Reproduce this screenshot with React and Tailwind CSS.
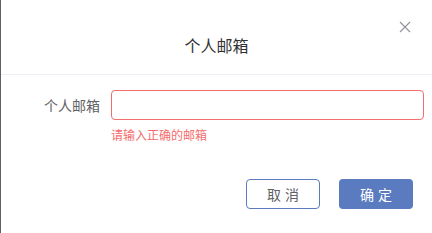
export default function App() {
  return (
    <div
      className="w-[432px] h-[233px] bg-white border-l border-[#5f6066] flex flex-col overflow-hidden"
      style={{ fontFamily: '"Noto Sans CJK SC", "Noto Sans", sans-serif' }}
    >
      {/* header */}
      <div className="relative h-[75px] shrink-0 border-b border-[#ebeef5] flex items-center justify-center pt-[15px]">
        <span className="text-[16px] leading-none text-[#303133]">个人邮箱</span>
        <button className="absolute right-[21px] top-[21px] text-[#909399]">
          <svg width="12" height="12" viewBox="0 0 12 12" fill="none" stroke="currentColor" strokeWidth="1.1">
            <path d="M1 1 L11 11 M11 1 L1 11" />
          </svg>
        </button>
      </div>

      {/* body */}
      <div className="flex items-start pt-[15px] pr-[8px]">
        <label className="w-[110px] shrink-0 pr-[11px] text-right text-[14px] leading-[30px] text-[#606266]">
          个人邮箱
        </label>
        <div className="flex-1">
          <input
            type="text"
            className="w-full h-[30px] rounded-[4px] border border-[#f56c6c] px-3 text-[14px] outline-none"
          />
          <div className="mt-[9px] text-[12px] leading-none text-[#f56c6c]">请输入正确的邮箱</div>
        </div>
      </div>

      {/* footer */}
      <div className="flex justify-end gap-[19px] pr-[19px] pt-[38px]">
        <button className="w-[74px] h-[30px] rounded-[4px] border border-[#5a7bc0] bg-white text-[14px] text-[#606266] tracking-[4px] pl-[4px]">
          取消
        </button>
        <button className="w-[74px] h-[30px] rounded-[4px] bg-[#5a7bbf] text-[14px] text-white tracking-[4px] pl-[4px]">
          确定
        </button>
      </div>
    </div>
  )
}
